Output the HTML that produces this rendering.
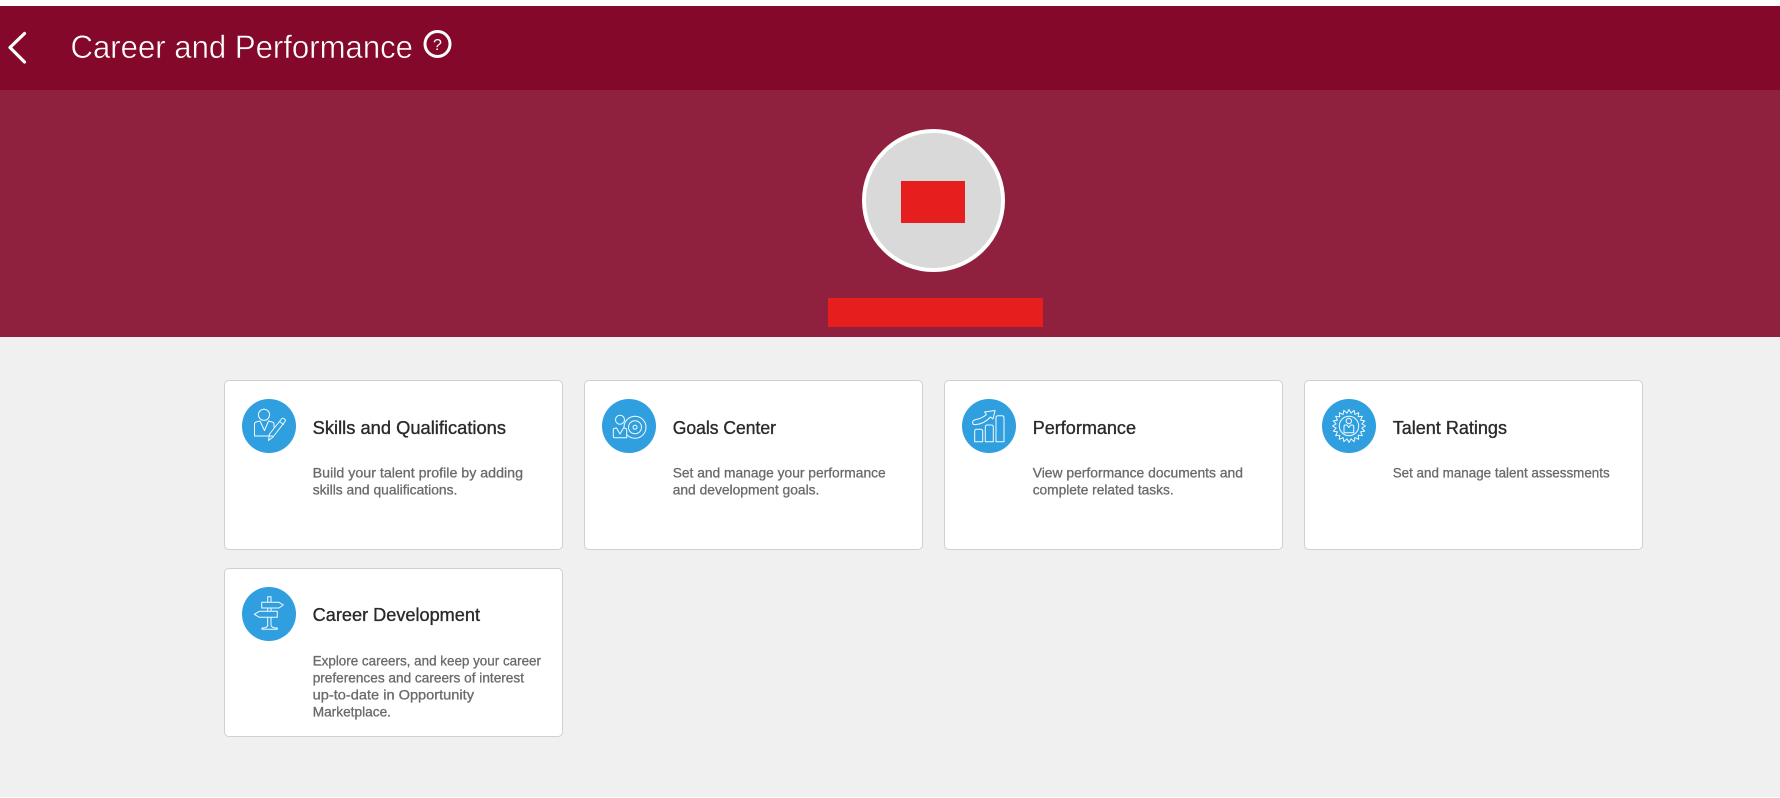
<!DOCTYPE html>
<html lang="en">
<head>
<meta charset="utf-8">
<title>Career and Performance</title>
<style>
html,body{margin:0;padding:0;width:1780px;height:798px;overflow:hidden;background:#f0f0f0;font-family:"Liberation Sans",sans-serif}
.abs{position:absolute}
.top{left:0;top:0;width:1780px;height:6px;background:#fff}
.bar{left:0;top:6px;width:1780px;height:84px;background:#83082a}
.hero{left:0;top:90px;width:1780px;height:247px;background:#8f213f}
.avatar{left:862px;top:129px;width:135px;height:135px;border:4px solid #fff;border-radius:50%;background:#d9d9d9}
.r1{left:901px;top:181px;width:64px;height:42px;background:#e61e1e}
.r2{left:828px;top:298px;width:215px;height:29px;background:#e61e1e}
.bottom{left:0;top:797px;width:1780px;height:1px;background:#fff}
.card{box-sizing:border-box;width:339px;background:#fff;border:1px solid #d0d0d0;border-radius:5px}
.layer{left:0;top:0}
.t{font-size:18px;fill:#2a2a2a;stroke:#2a2a2a;stroke-width:.35px}
.d{font-size:14px;fill:#6a6a6a;stroke:#6a6a6a;stroke-width:.3px}
.ic{fill:none;stroke:#fff;stroke-width:1;stroke-linejoin:round;stroke-linecap:round;opacity:.95}
</style>
</head>
<body>
<div class="abs top"></div>
<div class="abs bar"></div>
<div class="abs hero"></div>
<div class="abs avatar"></div>
<div class="abs r1"></div>
<div class="abs r2"></div>
<div class="abs bottom"></div>

<div class="abs card" style="left:224px;top:380px;height:170px"></div>
<div class="abs card" style="left:584px;top:380px;height:170px"></div>
<div class="abs card" style="left:944px;top:380px;height:170px"></div>
<div class="abs card" style="left:1304px;top:380px;height:170px"></div>
<div class="abs card" style="left:224px;top:568px;height:169px"></div>

<svg class="abs layer" width="1780" height="798" viewBox="0 0 1780 798" xmlns="http://www.w3.org/2000/svg" font-family="'Liberation Sans',sans-serif">
  <!-- header -->
  <path d="M24.5 33.5 L10 47.5 L24.5 62" fill="none" stroke="#fff" stroke-width="3.2" stroke-linecap="round" stroke-linejoin="round"/>
  <text x="70.5" y="58" font-size="32.5" fill="#fff" stroke="#83082a" stroke-width=".5" textLength="342.5" lengthAdjust="spacingAndGlyphs">Career and Performance</text>
  <circle cx="437.5" cy="44" r="12.5" fill="none" stroke="#fff" stroke-width="3"/>
  <text x="437.5" y="50" font-size="16" fill="#fff" text-anchor="middle">?</text>

  <!-- card 1 -->
  <circle cx="269" cy="426" r="27" fill="#2f9fdf"/>
  <g class="ic" transform="translate(242 399)">
    <circle cx="22" cy="15.8" r="5.6"/>
    <path d="M30.5 37 H12.5 V25 Q12.5 23.5 14 23 L18 22 L22.5 31.5 L26.5 22 L30 23 Q32 23.5 32 25 V28"/>
    <path d="M26.5 41.5 L27.5 35 L39.5 20 Q41 18.5 42.5 20 Q44 21 43 22.5 L31 38 Z M37.5 22.5 L41.5 25.5"/>
  </g>
  <text class="t" x="312.7" y="434" textLength="193.3" lengthAdjust="spacingAndGlyphs">Skills and Qualifications</text>
  <text class="d" x="312.7" y="477.3" textLength="210.3" lengthAdjust="spacingAndGlyphs">Build your talent profile by adding</text>
  <text class="d" x="312.7" y="494.3" textLength="144.7" lengthAdjust="spacingAndGlyphs">skills and qualifications.</text>

  <!-- card 2 -->
  <circle cx="629" cy="426" r="27" fill="#2f9fdf"/>
  <g class="ic" transform="translate(602 399)">
    <circle cx="33" cy="28.3" r="11"/>
    <circle cx="33" cy="28.3" r="6.5"/>
    <circle cx="33" cy="28.3" r="2"/>
    <circle cx="18" cy="20.7" r="4.5"/>
    <path fill="#2f9fdf" d="M24.7 38.7 H12.5 Q11.3 38.7 11.3 37.5 V31 Q11.3 29.5 12.8 29.3 L14.5 29 L18 35 L21.5 29 L23.5 29.3 Q24.7 29.6 24.7 31 Z"/>
  </g>
  <text class="t" x="672.7" y="434" textLength="103.3" lengthAdjust="spacingAndGlyphs">Goals Center</text>
  <text class="d" x="672.7" y="477.3" textLength="213" lengthAdjust="spacingAndGlyphs">Set and manage your performance</text>
  <text class="d" x="672.7" y="494.3" textLength="146.7" lengthAdjust="spacingAndGlyphs">and development goals.</text>

  <!-- card 3 -->
  <circle cx="989" cy="426" r="27" fill="#2f9fdf"/>
  <g class="ic" transform="translate(962 399)">
    <path d="M12.7 42.7 V32.3 Q12.7 30.3 14.7 30.3 H18.7 Q20.7 30.3 20.7 32.3 V42.7 Z"/>
    <path d="M23.3 42.7 V28 Q23.3 26 25.3 26 H29.3 Q31.3 26 31.3 28 V42.7 Z"/>
    <path d="M34 42.7 V18.7 Q34 16.7 36 16.7 H40 Q42 16.7 42 18.7 V42.7 Z"/>
    <path d="M11 25 Q9.5 21.5 14 20.5 Q20 19.5 24.5 15.5 L22.5 13 L33 11.5 L31 20 L28.5 18 Q22 25 14 25.5 Q12 26 11 25 Z"/>
  </g>
  <text class="t" x="1032.7" y="434" textLength="103.3" lengthAdjust="spacingAndGlyphs">Performance</text>
  <text class="d" x="1032.7" y="477.3" textLength="210.3" lengthAdjust="spacingAndGlyphs">View performance documents and</text>
  <text class="d" x="1032.7" y="494.3" textLength="141" lengthAdjust="spacingAndGlyphs">complete related tasks.</text>

  <!-- card 4 -->
  <circle cx="1349" cy="426" r="27" fill="#2f9fdf"/>
  <g class="ic" transform="translate(1322 399)">
    <polygon transform="translate(27 27)" points="16.5,0 12.84,2.03 15.69,5.1 11.58,5.9 13.35,9.7 9.19,9.19 9.7,13.35 5.9,11.58 5.1,15.69 2.03,12.84 0,16.5 -2.03,12.84 -5.1,15.69 -5.9,11.58 -9.7,13.35 -9.19,9.19 -13.35,9.7 -11.58,5.9 -15.69,5.1 -12.84,2.03 -16.5,0 -12.84,-2.03 -15.69,-5.1 -11.58,-5.9 -13.35,-9.7 -9.19,-9.19 -9.7,-13.35 -5.9,-11.58 -5.1,-15.69 -2.03,-12.84 0,-16.5 2.03,-12.84 5.1,-15.69 5.9,-11.58 9.7,-13.35 9.19,-9.19 13.35,-9.7 11.58,-5.9 15.69,-5.1 12.84,-2.03"/>
    <circle cx="27" cy="27" r="9.7"/>
    <circle cx="26.8" cy="22" r="2.7"/>
    <path d="M22 33.7 V27.5 Q22 26 23.5 26 L25 26 L26.8 28.5 L28.6 26 L30.2 26 Q31.7 26 31.7 27.5 V33.7 Z"/>
  </g>
  <text class="t" x="1392.7" y="434" textLength="114.3" lengthAdjust="spacingAndGlyphs">Talent Ratings</text>
  <text class="d" x="1392.7" y="477.3" textLength="217" lengthAdjust="spacingAndGlyphs">Set and manage talent assessments</text>

  <!-- card 5 -->
  <circle cx="269" cy="614" r="27" fill="#2f9fdf"/>
  <g class="ic" transform="translate(242 587)">
    <path d="M25.7 15.3 V9.7 H29 V15.3"/>
    <path d="M19.7 15.3 H37 L41.3 18 L37 21 H19.7 Z"/>
    <path d="M25.7 21 V24.3 M29 21 V24.3"/>
    <path d="M35.3 24.3 H17.3 L12.3 27.3 L17.3 30.3 H35.3 Z"/>
    <path d="M25.7 30.3 V38 Q25.7 41 20 41 V42.3 H35.3 V41 Q29 41 29 38 V30.3"/>
  </g>
  <text class="t" x="312.7" y="621" textLength="167.3" lengthAdjust="spacingAndGlyphs">Career Development</text>
  <text class="d" x="312.7" y="665.3" textLength="228.3" lengthAdjust="spacingAndGlyphs">Explore careers, and keep your career</text>
  <text class="d" x="312.7" y="682.3" textLength="211.3" lengthAdjust="spacingAndGlyphs">preferences and careers of interest</text>
  <text class="d" x="312.7" y="699.3" textLength="161.3" lengthAdjust="spacingAndGlyphs">up-to-date in Opportunity</text>
  <text class="d" x="312.7" y="716.3" textLength="78.3" lengthAdjust="spacingAndGlyphs">Marketplace.</text>
</svg>
</body>
</html>
